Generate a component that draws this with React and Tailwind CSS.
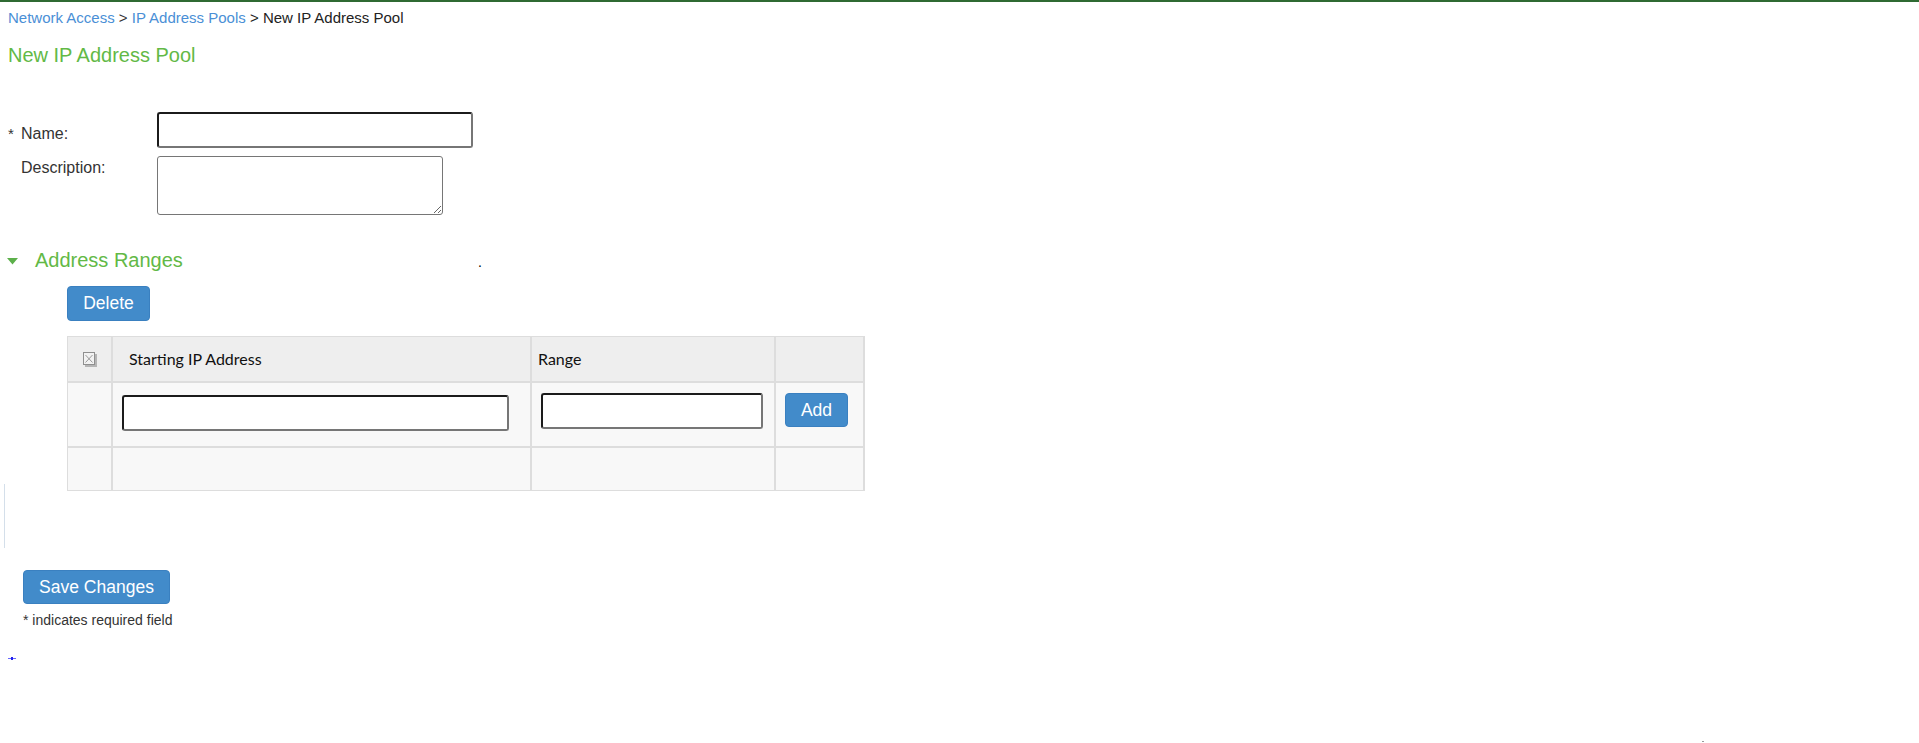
import React from "react";

function CheckIcon() {
  return (
    <svg width="14" height="15" viewBox="0 0 14 15">
      <rect x="2" y="2" width="12" height="13" fill="#b5b5b5" />
      <rect x="0.5" y="0.5" width="11" height="12" fill="#f2f2f2" stroke="#8f8f8f" />
      <path d="M2.5 3 L9.5 10.5 M9.5 3 L2.5 10.5" stroke="#9a9a9a" strokeWidth="1" />
    </svg>
  );
}

const inputCls =
  "bg-white rounded-[3px] border-2 border-t-[#1b1b1b] border-l-[#1b1b1b] border-r-[#767676] border-b-[#767676] outline-none";

export default function App() {
  return (
    <div className="relative w-[1919px] h-[743px] overflow-hidden bg-white font-['Liberation_Sans',Arial,sans-serif] text-[#333333]">
      <div className="h-[2px] bg-[#2f6a33]" />

      <div className="mt-[7px] pl-[8px] text-[15px] leading-[17px]">
        <span className="text-[#4a8fd6]">Network Access</span>
        <span className="text-[#333]"> &gt; </span>
        <span className="text-[#4a8fd6]">IP Address Pools</span>
        <span className="text-[#222]"> &gt; New IP Address Pool</span>
      </div>

      <div className="mt-[17px] pl-[8px] text-[20px] leading-[24px] text-[#62b946]">
        New IP Address Pool
      </div>

      <div className="mt-[45px] flex items-start">
        <div className="w-[157px] pl-[8px] mt-[12px] flex text-[16px] leading-[19px] text-[#333]">
          <span className="w-[13px] text-[15px]">*</span>
          <span>Name:</span>
        </div>
        <input type="text" className={`w-[316px] h-[36px] ${inputCls}`} />
      </div>

      <div className="mt-[8px] flex items-start">
        <div className="w-[157px] pl-[21px] mt-[2px] text-[16px] leading-[19px] text-[#333]">
          Description:
        </div>
        <textarea className="w-[286px] h-[59px] bg-white rounded-[3px] border border-[#767676] outline-none" />
      </div>

      <div className="mt-[33px] flex items-center h-[24px]">
        <svg className="ml-[7px] mt-[3px]" width="11" height="7" viewBox="0 0 11 7">
          <path d="M0 0 L11 0 L5.5 6.5 Z" fill="#5cb04a" />
        </svg>
        <span className="ml-[17px] text-[20px] leading-[24px] text-[#62b946]">Address Ranges</span>
        <span className="ml-[295px] mt-[3px] text-[14px] leading-[24px] text-black">.</span>
      </div>

      <button className="mt-[14px] ml-[67px] h-[35px] w-[83px] rounded-[4px] border border-[#3a80c0] bg-[#428bca] text-[17.5px] text-white flex items-center justify-center">
        Delete
      </button>

      <div className="mt-[15px] ml-[67px] w-[798px] border-t border-l border-b border-r-2 border-[#dddddd] font-['Lato','Liberation_Sans',sans-serif] text-[16px] text-[#111]">
        <div className="grid grid-cols-[45px_419px_244px_87px] h-[46px] bg-[#eeeeee] border-b-2 border-[#dddddd]">
          <div className="border-r-2 border-[#dddddd] flex items-center justify-center">
            <CheckIcon />
          </div>
          <div className="border-r-2 border-[#dddddd] flex items-center pl-[16px]">Starting IP Address</div>
          <div className="border-r-2 border-[#dddddd] flex items-center pl-[6px]">Range</div>
          <div />
        </div>
        <div className="grid grid-cols-[45px_419px_244px_87px] h-[65px] bg-[#f8f8f8] border-b-2 border-[#dddddd]">
          <div className="border-r-2 border-[#dddddd]" />
          <div className="border-r-2 border-[#dddddd] pl-[9px] pt-[12px]">
            <input type="text" className={`w-[387px] h-[36px] ${inputCls}`} />
          </div>
          <div className="border-r-2 border-[#dddddd] pl-[9px] pt-[10px]">
            <input type="text" className={`w-[222px] h-[36px] ${inputCls}`} />
          </div>
          <div className="pl-[9px] pt-[10px]">
            <button className="h-[34px] w-[63px] rounded-[4px] border border-[#3a80c0] bg-[#428bca] font-['Liberation_Sans',Arial,sans-serif] text-[17.5px] text-white flex items-center justify-center">
              Add
            </button>
          </div>
        </div>
        <div className="grid grid-cols-[45px_419px_244px_87px] h-[42px] bg-[#f8f8f8]">
          <div className="border-r-2 border-[#dddddd]" />
          <div className="border-r-2 border-[#dddddd]" />
          <div className="border-r-2 border-[#dddddd]" />
          <div />
        </div>
      </div>

      <div className="absolute left-[4px] top-[484px] h-[64px] w-px bg-[#d4dfea]" />

      <button className="mt-[79px] ml-[23px] h-[34px] w-[147px] rounded-[4px] border border-[#3a80c0] bg-[#428bca] text-[17.5px] text-white flex items-center justify-center">
        Save Changes
      </button>

      <div className="mt-[8px] ml-[23px] text-[14px] leading-[16px] text-[#333]">* indicates required field</div>

      <div className="mt-[29px] ml-[8px] flex items-center w-[8px] h-[3px]">
        <div className="h-px w-[3px] bg-[#6666ff]" />
        <div className="h-[3px] w-[2px] bg-[#2222ee]" />
        <div className="h-px w-[3px] bg-[#6666ff]" />
      </div>

      <div className="absolute left-[1702px] top-[741px] h-px w-[2px] bg-[#999]" />
    </div>
  );
}
